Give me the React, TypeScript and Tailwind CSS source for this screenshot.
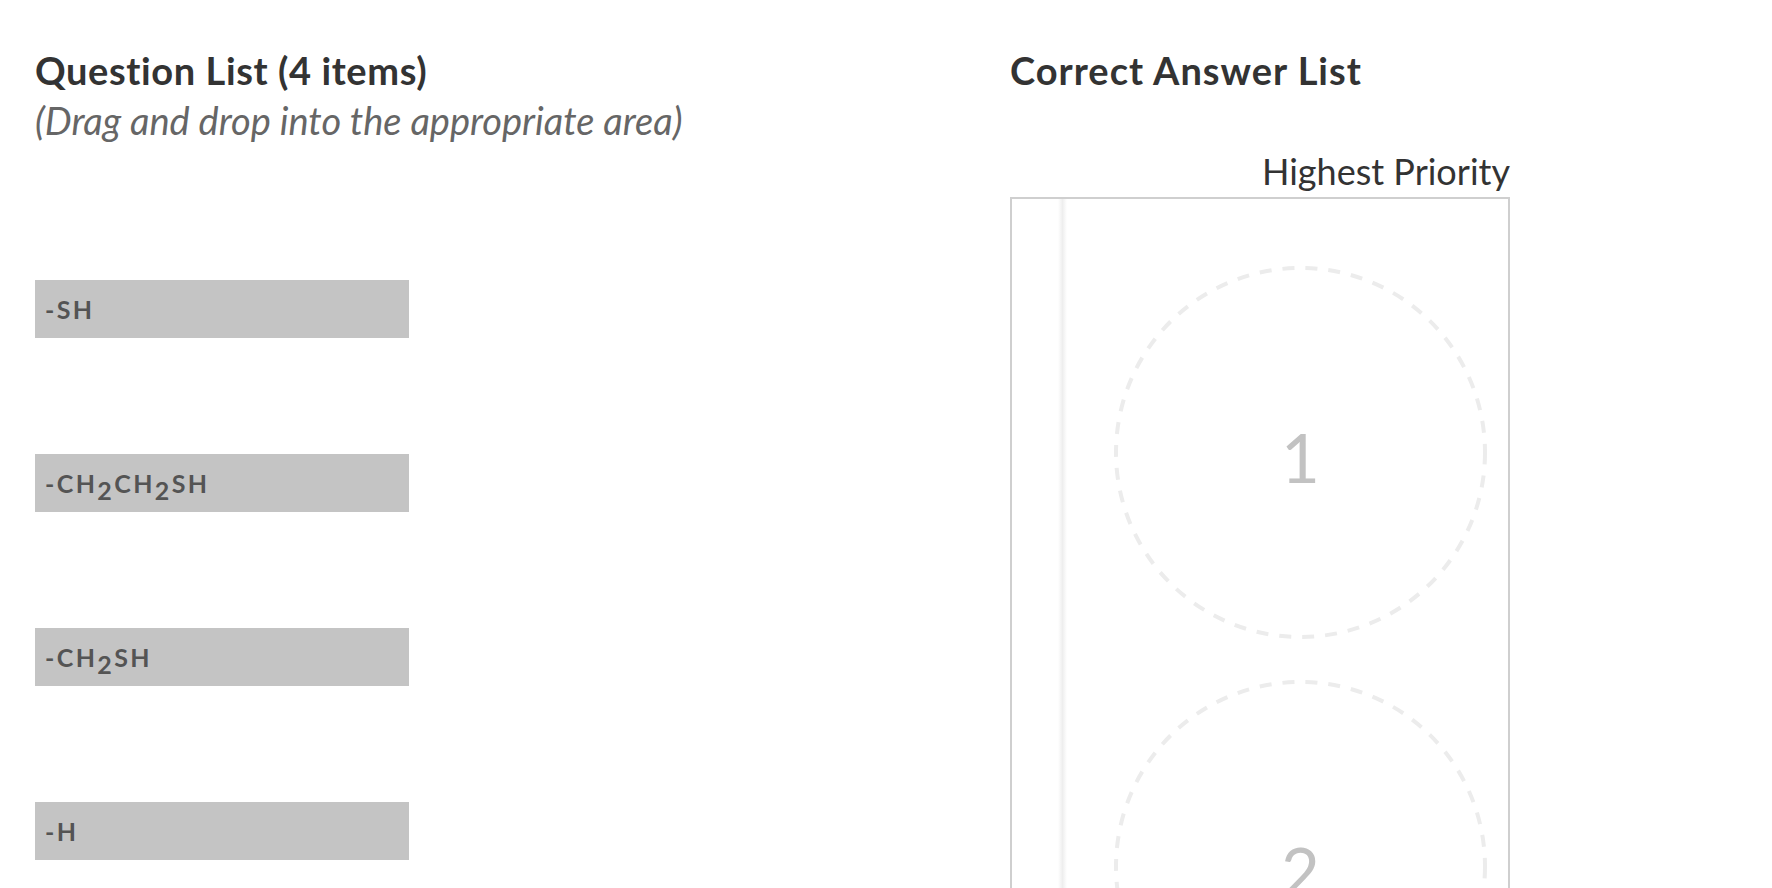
import React from "react"

const font = { fontFamily: "Lato, 'Open Sans', sans-serif" }

type Item = { id: string; parts: (string | { sub: string })[] }

const items: Item[] = [
  { id: "sh", parts: ["-SH"] },
  { id: "ch2ch2sh", parts: ["-CH", { sub: "2" }, "CH", { sub: "2" }, "SH"] },
  { id: "ch2sh", parts: ["-CH", { sub: "2" }, "SH"] },
  { id: "h", parts: ["-H"] },
]

function Chip({ item }: { item: Item }) {
  return (
    <div className="flex h-[58px] w-[374px] items-center bg-[#c4c4c4] px-[10px] text-[25px] font-bold tracking-[2.4px] text-[#545454]">
      <span className="leading-none">
        {item.parts.map((p, i) =>
          typeof p === "string" ? (
            <span key={i}>{p}</span>
          ) : (
            <span key={i} className="relative top-[7px]">
              {p.sub}
            </span>
          )
        )}
      </span>
    </div>
  )
}

function Slot({ n }: { n: number }) {
  return (
    <div className="relative flex h-[373px] w-[373px] shrink-0 items-center justify-center">
      {/* dashed drop ring */}
      <svg className="absolute inset-0" width="373" height="373" viewBox="0 0 373 373" aria-hidden="true">
        <circle cx="186.5" cy="186.5" r="184.5" fill="none" stroke="#ececec" strokeWidth="4" strokeDasharray="12 11" />
      </svg>
      <span className="relative mt-[10px] text-[67px] leading-none text-[#c2c2c2]">{n}</span>
    </div>
  )
}

export default function App() {
  return (
    <div className="h-[888px] w-full overflow-hidden bg-white" style={font}>
      <div className="grid grid-cols-[975px_500px] pl-[35px] pt-[45px]">
        {/* question list */}
        <div>
          <h2 className="text-[38px] font-bold leading-[50px] tracking-[0.6px] text-[#333]">
            Question List (4 items)
          </h2>
          <p className="text-[38px] italic leading-[50px] text-[#666]">
            (Drag and drop into the appropriate area)
          </p>
          <div className="mt-[135px] flex flex-col gap-[116px]">
            {items.map((it) => (
              <Chip key={it.id} item={it} />
            ))}
          </div>
        </div>

        {/* answer list */}
        <div>
          <h2 className="text-[38px] font-bold leading-[50px] tracking-[1px] text-[#333]">
            Correct Answer List
          </h2>
          <div className="mt-[56px] text-right text-[36px] leading-[40px] text-[#333]">
            Highest Priority
          </div>
          <div className="mt-[6px] flex h-[800px] border-2 border-[#cfcfcf]">
            <div className="w-[46px] shrink-0" />
            <div className="w-[9px] shrink-0 bg-gradient-to-r from-white via-[#eeeeee] to-white" />
            <div className="flex flex-1 flex-col gap-[41px] pl-[47px] pt-[67px]">
              <Slot n={1} />
              <Slot n={2} />
            </div>
          </div>
        </div>
      </div>
    </div>
  )
}
